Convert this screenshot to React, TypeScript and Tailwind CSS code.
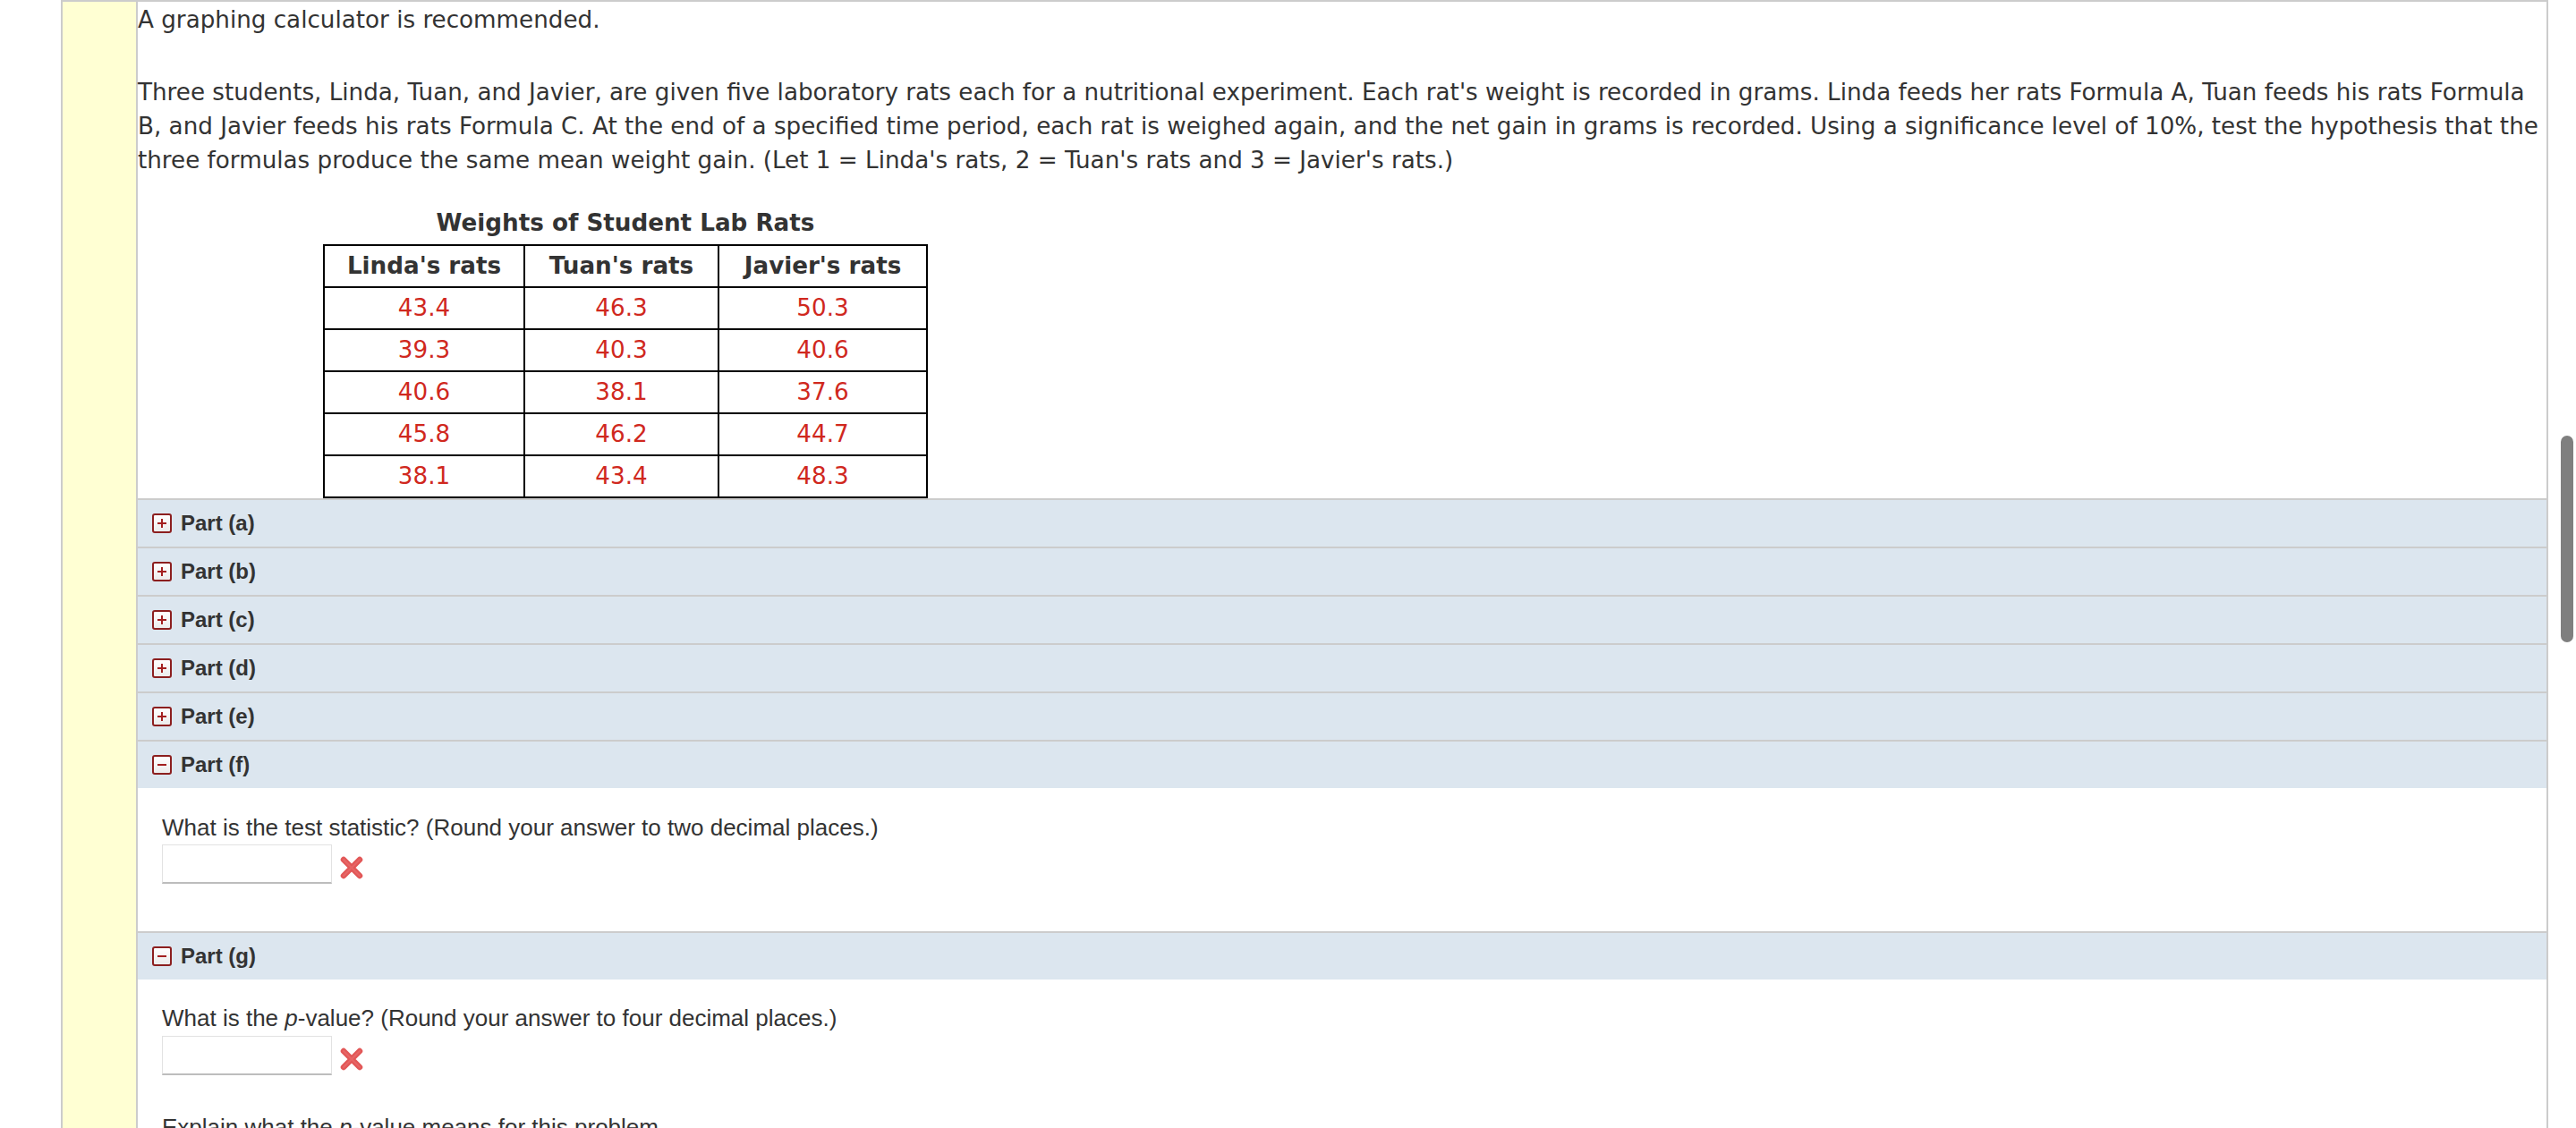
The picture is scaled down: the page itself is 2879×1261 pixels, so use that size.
import React from "react";

// Data for the weights table
const rows: string[][] = [
  ["43.4", "46.3", "50.3"],
  ["39.3", "40.3", "40.6"],
  ["40.6", "38.1", "37.6"],
  ["45.8", "46.2", "44.7"],
  ["38.1", "43.4", "48.3"],
];

const verdana = { fontFamily: '"DejaVu Sans", Verdana, sans-serif' };
const arial = { fontFamily: '"Liberation Sans", Arial, sans-serif' };

const ToggleIcon: React.FC<{ open: boolean }> = ({ open }) => (
  <span className="relative flex h-[22px] w-[22px] shrink-0 items-center justify-center rounded-[3px] border-2 border-[#8c1f1f] bg-gradient-to-b from-white to-[#ececec]">
    <span className="absolute h-[2px] w-[10px] bg-[#a32020]" />
    {!open && <span className="absolute h-[10px] w-[2px] bg-[#a32020]" />}
  </span>
);

const PartHeader: React.FC<{ label: string; open?: boolean }> = ({ label, open = false }) => (
  <div className="flex h-[54px] items-center gap-[10px] border-t-2 border-[#cccccc] bg-[#dce6ef] pl-[16px]">
    <ToggleIcon open={open} />
    <span className="text-[24px] font-bold leading-none text-[#333333]" style={arial}>
      {label}
    </span>
  </div>
);

const WrongMark = () => (
  <svg width="28" height="26" viewBox="0 0 28 26" className="ml-[8px] mt-[8px]">
    <path d="M5 4 L23 22 M23 4 L5 22" stroke="#e25757" strokeWidth="6.5" strokeLinecap="round" />
    <path d="M5 4 L23 22 M23 4 L5 22" stroke="#ec7676" strokeWidth="2" strokeLinecap="round" opacity="0.5" />
  </svg>
);

const AnswerBox = () => (
  <div className="flex items-center">
    <div className="h-[44px] w-[190px] border border-b-2 border-[#e2e2e2] border-b-[#bdbdbd] bg-white" />
    <WrongMark />
  </div>
);

export default function App() {
  return (
    <div className="relative h-[1261px] w-full overflow-hidden bg-white">
      <div className="flex h-full">
        <div className="w-[68px] shrink-0" />
        <div className="flex w-[2780px] shrink-0 border-x-2 border-t-2 border-[#cccccc]">
          {/* yellow gutter */}
          <div className="w-[84px] shrink-0 border-r-2 border-[#cccccc] bg-[#ffffd3]" />

          {/* main content */}
          <div className="flex-1">
            <div className="text-[26.2px] leading-[38px] text-[#333333]" style={verdana}>
              <div className="pt-[1px]">A graphing calculator is recommended.</div>
              <div className="mt-[43px] whitespace-nowrap">
                Three students, Linda, Tuan, and Javier, are given five laboratory rats each for a nutritional experiment. Each rat's weight is recorded in grams. Linda feeds her rats Formula A, Tuan feeds his rats Formula
                <br />
                B, and Javier feeds his rats Formula C. At the end of a specified time period, each rat is weighed again, and the net gain in grams is recorded. Using a significance level of 10%, test the hypothesis that the
                <br />
                three formulas produce the same mean weight gain. (Let 1 = Linda's rats, 2 = Tuan's rats and 3 = Javier's rats.)
              </div>
            </div>

            {/* table */}
            <div className="ml-[207px] mt-[38px] w-[676px]" style={verdana}>
              <div className="text-center text-[26.2px] font-bold leading-[26px] text-[#333333]">
                Weights of Student Lab Rats
              </div>
              <div className="mt-[11px] grid grid-cols-[222px_215px_231px] gap-[2px] bg-black p-[2px] text-[26.2px]">
                {["Linda's rats", "Tuan's rats", "Javier's rats"].map((h) => (
                  <div key={h} className="flex h-[45px] items-center justify-center bg-white font-bold text-[#333333]">
                    {h}
                  </div>
                ))}
                {rows.map((r, i) =>
                  r.map((v, j) => (
                    <div key={`${i}-${j}`} className="flex h-[45px] items-center justify-center bg-white text-[#d0281e]">
                      {v}
                    </div>
                  ))
                )}
              </div>
            </div>

            {/* parts */}
            <PartHeader label="Part (a)" />
            <PartHeader label="Part (b)" />
            <PartHeader label="Part (c)" />
            <PartHeader label="Part (d)" />
            <PartHeader label="Part (e)" />
            <PartHeader label="Part (f)" open />
            <div className="pb-[53px] pl-[27px] pt-[29px] text-[26px] leading-[30px] text-[#333333]" style={arial}>
              <div>What is the test statistic? (Round your answer to two decimal places.)</div>
              <div className="mt-[4px]">
                <AnswerBox />
              </div>
            </div>
            <PartHeader label="Part (g)" open />
            <div className="pl-[27px] pt-[28px] text-[26px] leading-[30px] text-[#333333]" style={arial}>
              <div>
                What is the <i>p</i>-value? (Round your answer to four decimal places.)
              </div>
              <div className="mt-[5px]">
                <AnswerBox />
              </div>
              <div className="mt-[43px]">
                Explain what the <i>p</i>-value means for this problem.
              </div>
            </div>
          </div>
        </div>
      </div>

      {/* overlay scrollbar */}
      <div className="absolute right-[3px] top-[487px] h-[231px] w-[14px] rounded-full bg-[#7f7f7f]" />
    </div>
  );
}
